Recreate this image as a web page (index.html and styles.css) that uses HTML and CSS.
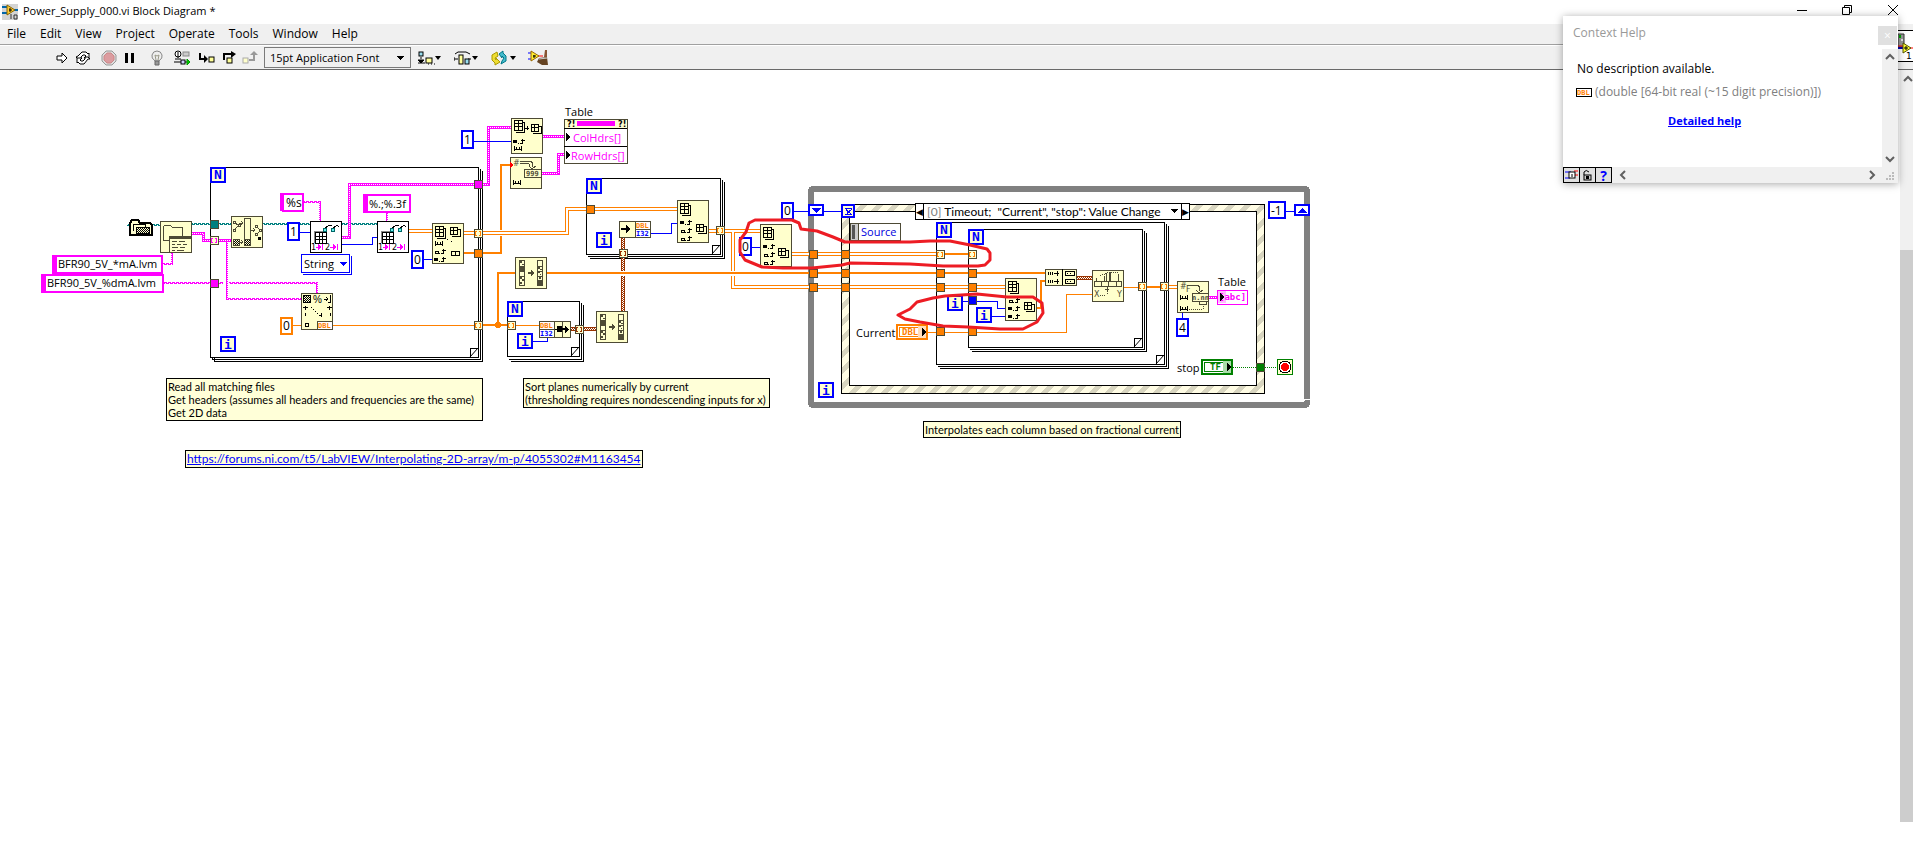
FILE: index.html
```html
<!DOCTYPE html>
<html lang="en">
<head>
<meta charset="utf-8">
<title>Power_Supply_000.vi Block Diagram *</title>
<link rel="stylesheet" href="styles.css">
</head>
<body>
<header>
  <div class="titlebar">
    <svg class="app-icon" width="16" height="16"><rect width="16" height="16" fill="#d4d4d4"/><path d="M0 3H6M0 9H6M12 6H16" stroke="#06a" stroke-width="2"/><path d="M5 1L13 6L5 11Z" fill="#fc3" stroke="#860"/><path d="M7 6h3M8 4v4" stroke="#000"/><path d="M9 10v5M12 11h3v4h-3z" stroke="#333" fill="none"/></svg>
    <h1>Power_Supply_000.vi Block Diagram *</h1>
    <div class="win-controls">
      <button aria-label="Minimize"><svg width="11" height="11"><path d="M1 5h10v1H1z"/></svg></button>
      <button aria-label="Restore"><svg width="11" height="11" fill="none" stroke="#000"><path d="M0.5 2.5h7v7h-7zM2.500 2V.5h7v7H8"/></svg></button>
      <button aria-label="Close"><svg width="11" height="11" stroke="#000"><path d="M0 0L10 10M10 0L0 10"/></svg></button>
    </div>
  </div>
  <nav class="menubar">
    <button>File</button><button>Edit</button><button>View</button><button>Project</button><button>Operate</button><button>Tools</button><button>Window</button><button>Help</button>
  </nav>
  <div class="toolbar">
    <button class="t-run" aria-label="Run"><svg width="12" height="12"><path d="M1 4h5V1l5 5-5 5V8H1z" fill="#fff" stroke="#000"/></svg></button>
    <button class="t-cont" aria-label="Run Continuously"><svg width="16" height="14" fill="#fff" stroke="#000"><path d="M3 5l4-4h4l2 2 1-1v5H9l2-2-1-1H8L6 6v2H3l-2-2z"/><path d="M13 8l-4 5H5l-2-2-1 1V7h5L5 9l1 1h2l2-2V6h3l2 2z"/></svg></button>
    <button class="t-abort" aria-label="Abort"><svg width="16" height="16"><path d="M5 1h6l4 4v6l-4 4H5l-4-4V5z" fill="#ddd" stroke="#999"/><path d="M6 3h4l3 3v4l-3 3H6l-3-3V6z" fill="#dc9ca0" stroke="#c88"/></svg></button>
    <button class="t-pause" aria-label="Pause"><svg width="10" height="12"><path d="M0 1h3v10H0zM6 1h3v10H6z"/></svg></button>
    <button class="t-bulb" aria-label="Highlight Execution"><svg width="14" height="16"><path d="M5 11Q1 8 2 5 3 1 7 1t5 4q1 3-3 6z" fill="#eee" stroke="#888"/><path d="M5 11h4v4H5z" fill="#999" stroke="#666"/><path d="M5 5l1 5M9 5l-1 5M5 5l2 1 2-1" stroke="#998" fill="none"/></svg></button>
    <button class="t-retain" aria-label="Retain Wire Values"><svg width="17" height="16" fill="none" stroke="#000"><circle cx="4" cy="4" r="3" fill="#fff"/><path d="M4 2v6M1 9h6M0 12h7M11 12h4"/><rect x="9" y="2" width="6" height="4" fill="#ccc" stroke="#888"/><rect x="7" y="10" width="4" height="4" fill="#ccf"/><path d="M13 9v6l3-3z" fill="#0c0" stroke="#090"/></svg></button>
    <button class="t-into" aria-label="Step Into"><svg width="17" height="14"><path d="M1 2v6h5" fill="none" stroke="#000" stroke-width="2"/><path d="M5 4l4 4-4 4z"/><rect x="10" y="6" width="5" height="5" fill="#ff9" stroke="#000"/></svg></button>
    <button class="t-over" aria-label="Step Over"><svg width="15" height="14"><path d="M2 9V3h9" fill="none" stroke="#000" stroke-width="2"/><path d="M9 0l5 3-5 4z"/><rect x="5" y="7" width="5" height="5" fill="#ff9" stroke="#000"/></svg></button>
    <button class="t-out" aria-label="Step Out"><svg width="16" height="14"><rect x="1" y="7" width="5" height="5" fill="#ffc" stroke="#aaa"/><path d="M7 9h5V4" fill="none" stroke="#999" stroke-width="2"/><path d="M8 4l4-4 4 4z" fill="#999"/></svg></button>
    <select class="font-pick" aria-label="Text settings"><option>15pt Application Font</option></select>
    <button class="t-align" aria-label="Align Objects"><svg width="24" height="14"><rect x="1" y="1" width="4" height="4" fill="#9de" stroke="#000"/><path d="M3 6v2M0 9h6l-3 3zM0 12h7M10 13h1M13 13h1M16 13h1" stroke="#000"/><rect x="8" y="7" width="6" height="5" fill="#ff9" stroke="#000"/><path d="M17 5h6l-3 4z"/></svg></button>
    <button class="t-dist" aria-label="Distribute Objects"><svg width="24" height="14"><path d="M1 3l3-2h8l4 2M0 6v4M0 8h4M14 8h3" stroke="#000" fill="none"/><rect x="5" y="4" width="4" height="9" fill="#ff9" stroke="#000"/><rect x="11" y="8" width="4" height="5" fill="#9de" stroke="#000"/><path d="M18 5h6l-3 4z"/></svg></button>
    <button class="t-reorder" aria-label="Reorder"><svg width="26" height="16"><path d="M6 2L1 5v5l3 3v2l5-3-4-4v2l-1-2 3-2z" fill="#ed3" stroke="#a90"/><path d="M10 14l5-3V6l-3-3V1L8 4l3 4V6l2 2-2 3z" fill="#4bc" stroke="#078"/><path d="M19 6h6l-3 4z"/></svg></button>
    <button class="t-clean" aria-label="Clean Up Diagram"><svg width="22" height="16"><path d="M0 3h4M0 9h4" stroke="#00f"/><path d="M10 6h5" stroke="red"/><path d="M3 1l8 5-8 5z" fill="#fe3" stroke="#960"/><path d="M5 6h3M6 5v3" stroke="#000"/><path d="M17 0h2v7h-3z" fill="#853"/><path d="M11 8l8-1 1 8h-6l-5-3z" fill="#642"/><path d="M11 9l8-1" stroke="#ccc"/></svg></button>
  </div>
</header>

<main>
  <section class="canvas" aria-label="Block diagram">
    <svg class="diagram" width="100%" height="100%">
      <defs>
        <pattern id="wave" width="4" height="2" patternUnits="userSpaceOnUse"><rect width="4" height="2" fill="#fff"/><path d="M0 0h3v1H0zM2 1h2v1H2zM0 1h1v1H0z" fill="#f0f"/></pattern>
        <pattern id="tealwave" width="4" height="2" patternUnits="userSpaceOnUse"><rect width="4" height="2" fill="#fff"/><path d="M0 0h3v1H0zM2 1h2v1H2zM0 1h1v1H0z" fill="#008080"/></pattern>
        <pattern id="check" width="2" height="2" patternUnits="userSpaceOnUse"><rect width="2" height="2" fill="#fff"/><path d="M0 0h1v1H0zM1 1h1v1H1z" fill="#930"/></pattern>
        <pattern id="bcheck" width="2" height="2" patternUnits="userSpaceOnUse"><rect width="2" height="2" fill="#ffffd0"/><path d="M0 0h1v1H0zM1 1h1v1H1z" fill="#000"/></pattern>
        <pattern id="hatch" width="16" height="16" patternUnits="userSpaceOnUse"><rect width="16" height="16" fill="#fffce4"/><path d="M0 16L16 0h-7L0 9zM16 16v-7l-7 7z" fill="#d8d5c0"/></pattern>
        <symbol id="tun" overflow="visible"><rect width="8" height="8" stroke="#4d4a35"/></symbol>
        <symbol id="arr" overflow="visible"><rect width="8" height="8" fill="#ffffd0" stroke="#4d4a35"/><path d="M1 2h2v1H2v3h1v1H1zM5 2h2v5H5V6h1V3H5z" fill="currentColor"/></symbol>
        <symbol id="grid" overflow="visible"><path d="M3 13h8V3H9M1 1h8v10H1zM1 4h8M1 7h8M5 1v10" fill="none" stroke="#000"/></symbol>
        <symbol id="grid2" overflow="visible"><path d="M3 10h8V3H9M1 1h7v7H1zM1 4h7M4 1v7" fill="none" stroke="#000"/></symbol>
        <symbol id="idx" overflow="visible"><path d="M1 1h3v2H1z" fill="none" stroke="#000"/><path d="M5 3h1M7 3h3M9 3v-4M8 0h4" stroke="#000" fill="none"/></symbol>
        <symbol id="idxf" overflow="visible"><path d="M0 0h4v3H0z"/><path d="M5 3h1M7 3h3M9 3v-4M8 0h4" stroke="#000" fill="none"/></symbol>
        <symbol id="num" overflow="visible"><path d="M1 0v5M8 0v5M2 3h6M3 1v3M6 1v3" stroke="#000" fill="none"/></symbol>
        <symbol id="nbox" overflow="visible"><rect x="1" y="1" width="14" height="14" fill="#ffffd0" stroke="#00f" stroke-width="2"/><text class="slab" x="8" y="12">N</text></symbol>
        <symbol id="ibox" overflow="visible"><rect x="1" y="1" width="14" height="14" fill="#ffffd0" stroke="#00f" stroke-width="2"/><text class="slab" x="8" y="13">i</text></symbol>
        <symbol id="fold" overflow="visible"><rect width="8" height="9" fill="#fff"/><path d="M0 9V0h8" fill="none" stroke="#000"/><path d="M0 9L8 0" stroke="#000" shape-rendering="auto"/></symbol>
        <symbol id="sheet" overflow="visible"><rect width="31" height="31" fill="#fff" stroke="#000"/><path d="M5 11h11v11H5zM5 15h11M5 18h11M9 11v11M12 11v11" fill="none" stroke="#000"/><path d="M4 10h12M4 10v12" stroke="#888"/><path d="M14 8l5-4 3 1M22 8l5-4 2 2" fill="none" stroke="#000"/><circle cx="15" cy="9" r="2" fill="#6ee" stroke="#066"/><circle cx="23" cy="9" r="2" fill="#6ee" stroke="#066"/><text class="pix" x="1" y="29">1</text><text class="pix" x="15" y="29">2</text><path d="M6 26h3M20 26h3" stroke="#f0f"/><path d="M8 23l4 3-4 3zM12 23h1v6h-1zM23 23l4 3-4 3zM27 23h1v6h-1z" fill="#f0f"/></symbol>
        <symbol id="transpose" overflow="visible"><rect width="31" height="31" class="node"/><path d="M4 3h5v6H4zM22 3h5v25h-5zM4 14h5v5H4zM4 19h5v9H4zM22 9h5M22 14h5M22 19h5" fill="#ffffd0" stroke="#4d4a35"/><path d="M4 9h6v5H4zM22 23h6v6h-6zM13 15h3v-2l3 3-3 3v-2h-3z" fill="#4d4a35"/><path d="M5 4h2v2H5zM7 7h2v1H7zM5 20h2v2H5zM7 22h2v2H7zM5 25h2v2H5zM23 10h2v2h-2zM25 12h2v1h-2zM23 15h2v1h-2zM25 17h1v1h-1zM24 20h2v2h-2z" fill="#4d4a35"/></symbol>
      </defs>
      <g transform="translate(0 -70)">
        <!-- structures -->
        <g class="loop">
          <path d="M214 168V361H482V171"/><path d="M212 168V359H480V169"/><rect x="210" y="167" width="268" height="190"/>
          <path d="M590 258H724V182M588 256H722V180"/><rect x="586" y="178" width="134" height="76"/>
          <path d="M511 361H583V305M509 359H581V303"/><rect x="507" y="301" width="72" height="55"/>
        </g>
        <rect x="811" y="189" width="496" height="216" rx="2" fill="#fff" stroke="#808080" stroke-width="6"/>
        <path d="M1303 399h8M1302 400h3" stroke="#fff"/>
        <rect x="841" y="204" width="423" height="189" fill="url(#hatch)" stroke="#000"/>
        <rect x="849" y="211" width="407" height="174" fill="#fff" stroke="#000"/>
        <g class="loop">
          <path d="M940 368H1168V226M938 366H1166V224"/><rect x="936" y="222" width="228" height="142"/>
          <path d="M972 351H1146V233M970 349H1144V231"/><rect x="968" y="229" width="174" height="118"/>
        </g>
        <use href="#fold" x="470" y="348"/><use href="#fold" x="712" y="245"/><use href="#fold" x="571" y="347"/><use href="#fold" x="1134" y="338"/><use href="#fold" x="1156" y="355"/>

        <!-- wires -->
        <g class="wire">
          <path class="path" d="M127 225H160M192 224H310M342 224H377"/>
          <path class="str" d="M163 264H172V253M164 283H223M229 283H317V293M304 202H320V221M387 213V221"/>
          <path class="str" d="M227 240V299H301"/>
          <path class="sa" d="M192 233H203V240H231M342 237H349V184H488V127H511M543 136H564M542 173H558V154H564M1209 297H1217"/><path class="sb" d="M192 233H203V240H231M342 237H349V184H488V127H511M543 136H564M542 173H558V154H564M1209 297H1217"/>
          <path class="int" d="M300 232H310M342 244H372V237H377M424 259H432M474 141H511M651 233H671V223H677M533 341H547V337M752 247H760M794 211H808M824 211H841M963 301H997V308H1005M992 316H1005M1182 313V319M1286 211H1295"/>
          <path class="o1" d="M293 325H301M333 325H474M515 325H539M928 332H1066V294H1092M1124 287H1138"/>
          <path class="o3" d="M464 253H501V165H511M482 325H507M498 325V273H515M547 273H1045M945 254H968M1037 308H1041V281H1045M1147 287H1160"/>
          <path d="M497 233h8" stroke="#fff" stroke-width="6"/>
          <path class="da" d="M409 231H432M464 233H567V209H677M709 231H760M733 231V287H1005M792 254H936M1168 287H1177"/><path class="db" d="M409 231H432M464 233H567V209H677M709 231H760M733 231V287H1005M792 254H936M1168 287H1177"/>
          <path class="ba" d="M623 238V311M571 329H596M1077 278H1092"/><path class="bb" d="M623 238V311M571 329H596M1077 278H1092"/>
          <path d="M616 273h14M728 273h10" stroke="#fff" stroke-width="5"/><path class="o3" d="M615 273h16M727 273h12"/>
          <path d="M1233 367H1277" stroke="#008000" stroke-dasharray="1 1"/>
          <path d="M855 211H915" stroke="#000"/>
        </g>
        <circle cx="498" cy="325" r="3" fill="#ff8000"/>

        <!-- tunnels -->
        <g fill="#ff8000"><use href="#tun" x="474" y="249"/><use href="#tun" x="586" y="205"/>
          <use href="#tun" x="809" y="250"/><use href="#tun" x="809" y="269"/><use href="#tun" x="809" y="283"/>
          <use href="#tun" x="841" y="250"/><use href="#tun" x="841" y="269"/><use href="#tun" x="841" y="283"/>
          <use href="#tun" x="936" y="269"/><use href="#tun" x="936" y="283"/><use href="#tun" x="936" y="327"/>
          <use href="#tun" x="968" y="269"/><use href="#tun" x="968" y="283"/><use href="#tun" x="968" y="327"/></g>
        <g fill="#f0f"><use href="#tun" x="474" y="180"/><use href="#tun" x="210" y="279"/></g>
        <use href="#tun" x="210" y="220" fill="#008080"/><use href="#tun" x="968" y="296" fill="#00f"/><use href="#tun" x="1256" y="363" fill="#008000"/>
        <g color="#ff8000"><use href="#arr" x="474" y="229"/><use href="#arr" x="474" y="321"/><use href="#arr" x="716" y="226"/><use href="#arr" x="507" y="321"/><use href="#arr" x="936" y="250"/><use href="#arr" x="968" y="250"/><use href="#arr" x="1138" y="282"/><use href="#arr" x="1160" y="282"/></g>
        <g color="#993300"><use href="#arr" x="619" y="249"/><use href="#arr" x="575" y="325"/></g>
        <g color="#ff00ff"><use href="#arr" x="210" y="236"/></g>

        <use href="#nbox" x="210" y="167"/><use href="#nbox" x="586" y="178"/><use href="#nbox" x="507" y="301"/><use href="#nbox" x="936" y="222"/><use href="#nbox" x="968" y="229"/>
        <use href="#ibox" x="220" y="336"/><use href="#ibox" x="596" y="232"/><use href="#ibox" x="517" y="333"/><use href="#ibox" x="818" y="382"/><use href="#ibox" x="947" y="295"/><use href="#ibox" x="976" y="307"/>

        <!-- path constant and list folder -->
        <path d="M130 235V223l2-3h6l2 3h10l2 2v10z" fill="#ffffd0" stroke="#000" stroke-width="2"/><path d="M133 231v-7h12v3" fill="none" stroke="#000"/><rect x="136" y="227" width="13" height="6" fill="url(#bcheck)" stroke="#000"/>
        <g transform="translate(160 221)"><rect width="31" height="31" class="node"/><path d="M3 19V6l2-2h5l2 2h10v11M3 19h6" class="ol"/><rect x="9" y="15" width="22" height="16" class="ol"/><path d="M9 15h22v3H9z" fill="#4d4a35"/><path d="M12 20h5M19 20h6M12 23h3M17 23h4M23 23h4M12 26h6M20 26h5M12 29h3M17 29h7" class="ol"/></g>
        <!-- strip path -->
        <g transform="translate(231 216)"><rect width="31" height="31" class="node"/><path d="M13 2h6v27h-6z" class="ol"/><path d="M2 5h2v2H2zM7 8h2v2H7zM2 13h2v2H2zM4 7l3 2M4 13l3-3M8 7h4M10 5l2 2-2 2M24 9h2v2h-2zM28 13h2v2h-2zM24 17h2v2h-2zM20 14h4M22 12l2 2-2 2M26 11l2 2M26 18l2-2M8 26h4M10 24l2 2-2 2" class="ol"/><path d="M2 23h6v6H2zM13 23h6v6h-6z" fill="url(#bcheck)" stroke="#4d4a35"/><path d="M27 21h3v3h-3z"/></g>
        <use href="#sheet" x="310" y="221"/><use href="#sheet" x="377" y="221"/>
        <!-- index array beside loop edge -->
        <g transform="translate(432 223)"><rect width="31" height="40" class="node"/><use href="#grid" x="2" y="2"/><use href="#grid2" x="17" y="3"/><use href="#num" x="2" y="18"/><path d="M15 16h1M19 18h1" stroke="#000"/><use href="#idx" x="2" y="27"/><use href="#idxf" x="2" y="35"/><path d="M19 28h8v4h-8zM23 28v4" class="bk"/></g>
        <!-- scan from string -->
        <g transform="translate(301 293)"><rect width="31" height="36" class="node"/><rect x="2" y="2" width="7" height="7" fill="url(#bcheck)" stroke="#000"/><text class="sm" x="12" y="10">%</text><path d="M23 6h4M25 4l2 2-2 2M29 2v7h-2M4 13v4M2 14h5M28 13v4M26 14h5M4 20v3M29 20v3M10 14h1M12 16h1M14 18h1M16 20h1M18 22l2 1v-3" class="bk"/><circle cx="6" cy="32" r="2" class="bk"/><rect x="16" y="28" width="15" height="8" fill="#fff" stroke="#4d4a35"/><text class="dt or" x="17" y="35">DBL</text></g>
        <!-- array subset / number to string -->
        <g transform="translate(511 118)"><rect width="31" height="35" class="node"/><use href="#grid" x="2" y="1"/><use href="#grid2" x="19" y="5"/><path d="M14 10h4M16 8v4" class="bk"/><use href="#idxf" x="2" y="22"/><use href="#num" x="2" y="28"/></g>
        <g transform="translate(510 157)"><rect width="31" height="31" class="node"/><text class="pix ol2" x="3" y="9">#</text><path d="M10 4h9q4 0 4 6M10 6h8q2 1 2 4M19 9l3 3 4-3" class="ol"/><rect x="14" y="12" width="17" height="8" class="ol"/><text class="dt ol2" x="16" y="19">999</text><use href="#num" x="2" y="23"/></g>
        <path d="M510 162l4 3-4 3z" fill="red"/>
        <!-- table property node -->
        <g transform="translate(564 119)"><rect width="63" height="44" fill="#fff" stroke="#4d4a35"/><path d="M1 1h62v8H1z" fill="#ffffd0"/><path d="M0 9h63M0 27h63" stroke="#000"/><path d="M13 2h38v5H13z" fill="#f0f"/><text class="pix b" x="3" y="8">?!</text><text class="pix b" x="54" y="8">?!</text><path d="M2 14l4 4-4 4zM2 32l4 4-4 4z"/><text class="prop" x="9" y="23">ColHdrs[]</text><text class="prop" x="7" y="41">RowHdrs[]</text></g>
        <text class="cap" x="565" y="116">Table</text>
        <!-- index arrays with three terminals -->
        <g transform="translate(677 200)"><rect width="31" height="42" class="node"/><use href="#grid" x="2" y="2"/><use href="#grid2" x="18" y="23"/><use href="#idxf" x="3" y="21"/><use href="#idx" x="3" y="29"/><use href="#idx" x="3" y="37"/></g>
        <g transform="translate(1005 278)"><rect width="31" height="42" class="node"/><use href="#grid" x="2" y="2"/><use href="#grid2" x="18" y="23"/><use href="#idx" x="3" y="21"/><use href="#idxf" x="3" y="29"/><use href="#idxf" x="3" y="37"/></g>
        <!-- unbundle / bundle -->
        <g transform="translate(619 221)"><rect width="31" height="16" class="node"/><path d="M16 0v16h15V0z" fill="#fff" stroke="#4d4a35"/><path d="M16 8h15" stroke="#4d4a35"/><path d="M2 7h5V4l4 4-4 4V9H2z"/><text class="dt or" x="17" y="7">DBL</text><text class="dt bl" x="17" y="15">I32</text></g>
        <g transform="translate(539 321)"><rect width="31" height="16" class="node"/><path d="M0 0v16h15V0z" fill="#fff" stroke="#4d4a35"/><path d="M0 8h15M23 0v16" stroke="#4d4a35"/><path d="M16 8h2V5h5v2h3V5l4 3-4 4V9h-3v2h-5V9h-2z"/><text class="dt or" x="1" y="7">DBL</text><text class="dt bl" x="1" y="15">I32</text></g>
        <use href="#transpose" x="515" y="257"/><use href="#transpose" x="596" y="311"/>

        <!-- constants -->
        <g class="const pink"><path d="M52 255h5v19h-5zM41 274h5v19h-5zM280 193h4v18h-4zM363 194h5v19h-5z" fill="#f0f" stroke="none"/><rect x="56" y="256" width="106" height="17"/><rect x="45" y="275" width="118" height="17"/><rect x="283" y="194" width="20" height="17"/><rect x="367" y="195" width="43" height="17"/></g>
        <g class="const blue"><rect x="288" y="223" width="11" height="17"/><rect x="412" y="251" width="11" height="17"/><rect x="462" y="131" width="11" height="17"/><rect x="740" y="238" width="11" height="17"/><rect x="782" y="203" width="11" height="16"/><rect x="1177" y="319" width="11" height="17"/><rect x="1269" y="202" width="16" height="16"/><rect x="809" y="205" width="14" height="10"/><rect x="1295" y="205" width="14" height="10"/><rect x="842" y="205" width="12" height="12" fill="#ffffd0"/></g>
        <rect x="281" y="318" width="11" height="16" fill="#fff" stroke="#ff8000" stroke-width="2"/>
        <path d="M811 208h10l-5 5zM1297 213h10l-5-5z" fill="#00f"/><path d="M845 208h7M845 214h7M846 208v2l4 3v2M851 208v2l-4 3v2" stroke="#00f" fill="none"/>
        <g class="val"><text class="str-val" x="58" y="268">BFR90_5V_*mA.lvm</text><text class="str-val" x="47" y="287">BFR90_5V_%dmA.lvm</text><text x="286" y="207">%s</text><text class="str-val" x="369" y="208">%.;%.3f</text>
          <text x="290" y="236">1</text><text x="414" y="264">0</text><text x="464" y="144">1</text><text x="742" y="251">0</text><text x="784" y="215">0</text><text x="1179" y="332">4</text><text x="1271" y="215">-1</text><text x="283" y="330">0</text></g>

        <!-- index array outside the while loop -->
        <g transform="translate(760 224)"><rect width="31" height="42" class="node"/><use href="#grid" x="2" y="2"/><use href="#grid2" x="17" y="23"/><use href="#idxf" x="3" y="21"/><use href="#idx" x="3" y="29"/><use href="#idx" x="3" y="37"/></g>
        <!-- event source node -->
        <rect x="850" y="223" width="50" height="17" fill="#fff" stroke="#4d4a35"/><path d="M850 223h8v17h-8z" fill="#ccc" stroke="#4d4a35"/><path d="M852 225h3v14h-3z" fill="#555"/><text class="src" x="861" y="236">Source</text>
        <!-- build cluster -->
        <g transform="translate(1045 269)"><rect width="31" height="16" class="node"/><path d="M17 0v16" stroke="#000"/><path d="M3 3v3M5 3v3M7 3v3M9 4h5M12 2v5M3 11v3M5 11v3M7 11v3M9 12h5M12 10v5M20 2h9v4h-9zM20 10h9v4h-9zM22 4h1M25 4h1M22 12h1M25 12h1" class="bk"/></g>
        <!-- interpolate -->
        <g transform="translate(1092 270)"><rect width="31" height="31" class="node"/><path d="M2 11h22v5H2zM24 11h5v5h-5zM9 11v5M16 11v5M4 8v3M12 6v5M14 4v7M17 2v9M18 2v9M26 4v7M15 16v5M13 19h4" class="ol"/><path d="M8 6l9-4h9M8 25h5M15 21v4" class="ol" stroke-dasharray="1 1"/><text class="pix ol2" x="2" y="27">X</text><text class="pix ol2" x="25" y="27">Y</text></g>
        <!-- number to fractional string -->
        <g transform="translate(1177 281)"><rect width="31" height="31" class="node"/><text class="pix ol2" x="3" y="8">#</text><text class="pix ol2" x="9" y="11">F</text><path d="M10 4h9q4 0 4 6M19 9l3 3 4-3M22 23v-2M22 23h7v-2" class="ol"/><rect x="15" y="12" width="16" height="8" class="ol"/><text class="dt ol2" x="15" y="19">n.nn</text><use href="#num" x="2" y="14"/><use href="#num" x="2" y="25"/><path d="M12 28h14v-4" class="ol" stroke-dasharray="1 1"/></g>

        <!-- terminals -->
        <g transform="translate(896 324)"><rect x="1" y="1" width="30" height="14" fill="#fff" stroke="#ff8000" stroke-width="2"/><rect x="3" y="3" width="25" height="9" fill="none" stroke="#ff8000"/><rect x="22" y="2" width="8" height="12" fill="#fdb"/><text class="term or" x="6" y="11">DBL</text><path d="M26 4l4 4-4 4z"/></g>
        <text class="cap" x="856" y="337">Current</text>
        <g transform="translate(1216 289)"><rect x="1" y="1" width="30" height="14" fill="#fff" stroke="#f0f"/><rect x="2" y="2" width="8" height="12" fill="#fbf"/><text class="term pk" x="3" y="11">[abc]</text><path d="M4 4l4 4-4 4z"/></g>
        <text class="cap" x="1218" y="286">Table</text>
        <g transform="translate(1201 359)"><rect x="1" y="1" width="30" height="14" fill="#fff" stroke="#008000" stroke-width="2"/><rect x="3" y="3" width="25" height="9" fill="none" stroke="#008000"/><rect x="22" y="2" width="8" height="12" fill="#ada"/><text class="term gr" x="9" y="11">TF</text><path d="M26 4l4 4-4 4z"/></g>
        <text class="cap" x="1177" y="372">stop</text>
        <g transform="translate(1277 359)"><rect width="15" height="15" fill="#ffffd0" stroke="#008000"/><circle cx="8" cy="8" r="6" fill="#fff" stroke="#000"/><circle cx="8" cy="8" r="4" fill="red"/></g>

        <!-- hand-drawn highlights -->
        <g class="ink"><path d="M740 240L746 232L749 223L755 220H792L799 223L801 229L817 231L833 237L845 242H910L930 241H950L970 245L987 249L990 253V260L985 265L978 266H943L910 264L850 263L842 265L812 268H783L762 267L745 260L740 252Z"/><path d="M898 315L910 309L917 302L933 298L945 296L977 294L1007 297H1033L1042 303L1043 313L1037 322L1023 329H1000L968 327L943 326L920 322L905 319Z"/></g>
      </g>
    </svg>
    <div class="event-bar"><button class="prev" aria-label="Previous case">◀</button><label for="case">[0]</label><select id="case"><option>Timeout;&nbsp; "Current", "stop": Value Change</option></select><button class="next" aria-label="Next case">▶</button></div>
    <select class="ring" aria-label="Format"><option>String</option></select>
    <p class="note note-read">Read all matching files<br>Get headers (assumes all headers and frequencies are the same)<br>Get 2D data</p>
    <p class="note note-sort">Sort planes numerically by current<br>(thresholding requires nondescending inputs for x)</p>
    <p class="note note-interp">Interpolates each column based on fractional current</p>
    <a class="note note-link" href="https://forums.ni.com/t5/LabVIEW/Interpolating-2D-array/m-p/4055302#M1163454">https://forums.ni.com/t5/LabVIEW/Interpolating-2D-array/m-p/4055302#M1163454</a>
  </section>
  <div class="scrollbar"><svg width="13" height="14" fill="none" stroke="#606060" stroke-width="2"><path d="M4 11l4-4 4 4"/></svg><div class="thumb"></div></div>
</main>

<div class="vi-icon"><svg width="15" height="30"><path d="M0 3h6v13H0z" fill="#999" stroke="#333"/><path d="M1 4h2v3H1z" fill="#0a0"/><circle cx="4" cy="9" r="1" fill="#fff"/><path d="M0 17h5" stroke="#00a" stroke-width="2"/><path d="M0 15h5M11 17h4" stroke="red"/><path d="M5 12l8 5-8 5z" fill="#ff3" stroke="#550"/><path d="M6 17h4M8 15v4" stroke="#000"/><text class="vi-no" x="8" y="28">1</text></svg></div>

<aside class="help">
  <div class="help-title"><h2>Context Help</h2><button aria-label="Close help">×</button></div>
  <div class="help-mid">
    <div class="help-body">
      <p>No description available.</p>
      <p class="type"><svg class="dbl" width="17" height="10"><rect x="1" y="1" width="15" height="8" fill="#fff" stroke="#000"/><text class="dt or" x="2" y="8">DBL</text></svg>(double [64-bit real (~15 digit precision)])</p>
      <a href="#help">Detailed help</a>
    </div>
    <div class="help-scroll"><svg width="15" height="16"><path d="M4 10l4-4 4 4"/></svg><svg width="15" height="16"><path d="M4 6l4 4 4-4"/></svg></div>
  </div>
  <div class="help-foot">
    <button aria-label="Show optional terminals"><svg width="13" height="14"><path d="M0 4h6M0 10h5" stroke="#00f"/><path d="M9 3h5M9 7h5" stroke="red"/><rect x="4" y="4" width="6" height="6" fill="#fff" stroke="#000"/><path d="M7 6v3" stroke="#000"/></svg></button><button aria-label="Lock help"><svg width="13" height="14"><path d="M3 7V4q2-3 5 0" fill="none" stroke="#000"/><rect x="3" y="7" width="7" height="5" fill="#ccc" stroke="#000"/><path d="M5 8h3v3H5z"/></svg></button><button class="q" aria-label="More help">?</button>
    <svg class="left" width="16" height="16"><path d="M10 4L6 8l4 4"/></svg><svg class="right" width="16" height="16"><path d="M6 4l4 4-4 4"/></svg>
    <svg class="grip" width="10" height="10"><path d="M6 0h2v2H6zM3 3h2v2H3zM6 3h2v2H6zM0 6h2v2H0zM3 6h2v2H3zM6 6h2v2H6z" fill="#bbb"/></svg>
  </div>
</aside>
</body>
</html>
```
FILE: styles.css
```css
* { box-sizing: border-box; }
body { margin: 0; height: 100vh; display: flex; flex-direction: column; position: relative; overflow: hidden; background: #fff; color: #000; font: 12px/16px "Open Sans", "Noto Sans", sans-serif; }
button { border: 0; padding: 0; margin: 0; background: none; font: inherit; color: inherit; }
h1, h2, p { margin: 0; font-size: 12px; font-weight: 400; }
svg { display: block; }

.titlebar { height: 24px; display: flex; align-items: center; padding: 0 14px 2px 2px; gap: 5px; }
.app-icon { margin-top: 1px; }
.titlebar h1 { font-size: 11px; }
.win-controls { margin-left: auto; display: flex; gap: 35px; margin-top: -2px; }
.menubar { height: 21px; display: flex; gap: 14px; padding-left: 7px; background: #f0f0f0; border-bottom: 1px solid #a0a0a0; align-items: center; font-size: 12px; }
.toolbar { height: 25px; display: flex; align-items: center; background: #f0f0f0; border-top: 1px solid #fff; border-bottom: 1px solid #696969; padding-left: 56px; }
.t-cont { margin-left: 7px; }
.t-abort { margin-left: 10px; }
.t-pause { margin-left: 8px; }
.t-bulb { margin-left: 15px; }
.t-retain { margin-left: 10px; }
.t-into { margin-left: 8px; }
.t-over { margin-left: 6px; }
.t-out { margin-left: 5px; }
select { appearance: none; font: inherit; color: #000; }
.font-pick { width: 147px; height: 21px; margin-left: 6px; padding: 0 5px; border: 1px solid #7a7a7a; border-radius: 0; background: linear-gradient(#000, #000) 132px 8px / 7px 1px no-repeat, linear-gradient(#000, #000) 133px 9px / 5px 1px no-repeat, linear-gradient(#000, #000) 134px 10px / 3px 1px no-repeat, linear-gradient(#000, #000) 135px 11px / 1px 1px no-repeat, #f0f0f0; font: 11px "Open Sans", sans-serif; }
.t-align { margin-left: 7px; }
.t-dist { margin-left: 12px; }
.t-reorder { margin-left: 13px; }
.t-clean { margin-left: 11px; }

main { flex: 1; display: flex; min-height: 0; }
.canvas { flex: 1; position: relative; overflow: hidden; }
.scrollbar { width: 13px; background: #f0f0f0; display: flex; flex-direction: column; border-bottom: 34px solid #fff; }
.thumb { flex: 1; margin-top: 166px; background: #cdcdcd; }

.diagram { shape-rendering: crispEdges; font-family: "Open Sans", "Noto Sans", sans-serif; }
.loop { fill: #fff; stroke: #000; }
.loop path { fill: none; }
.wire { fill: none; }
.path { stroke: url(#tealwave); stroke-width: 2; }
.str { stroke: url(#wave); stroke-width: 2; }
.sa { stroke: #f0f; stroke-width: 3; }
.sb { stroke: #fff; stroke-width: 1; stroke-dasharray: 1 1; }
.int { stroke: #00f; }
.o1 { stroke: #ff8000; }
.o3 { stroke: #ff8000; stroke-width: 2; }
.da { stroke: #ff8000; stroke-width: 4; }
.db { stroke: #fff; stroke-width: 2; }
.ba { stroke: #930; stroke-width: 4; }
.bb { stroke: url(#check); stroke-width: 2; }
.node { fill: #ffffcc; stroke: #4d4a35; }
.ol { fill: none; stroke: #4d4a35; }
.ol2 { fill: #4d4a35; }
.bk { fill: none; stroke: #000; }
.or { fill: #ff8000; }
.bl { fill: #00f; }
.pk { fill: #f0f; }
.gr { fill: #008000; }
.slab { font: bold 13px "DejaVu Sans Mono", monospace; fill: #00f; text-anchor: middle; }
.pix { font: 8px "DejaVu Sans", sans-serif; }
.sm { font: 10px "Liberation Sans", sans-serif; }
.b { font-weight: 700; }
.dt { font: bold 7px "DejaVu Sans Mono", monospace; }
.term { font: bold 9px "DejaVu Sans Mono", monospace; }
.const { fill: #fff; stroke-width: 2; }
.pink { stroke: #f0f; }
.blue { stroke: #00f; }
.val { font-size: 12px; }
.str-val { font-size: 11px; }
.cap { font-size: 11px; }
.prop { font-size: 11px; fill: #f0f; }
.src { font-size: 11px; fill: #00d; }
.ink { fill: none; stroke: #ed1c24; stroke-width: 3; stroke-linejoin: round; shape-rendering: auto; }

.event-bar { position: absolute; left: 915px; top: 133px; width: 275px; height: 17px; display: flex; background: #fff; border: 1px solid #000; font: 12px/15px Lato, sans-serif; }
.event-bar button { width: 8px; font: 9px/14px "DejaVu Sans", sans-serif; overflow: hidden; }
.event-bar .prev { border-right: 1px solid #000; }
.event-bar .next { border-left: 1px solid #000; }
.event-bar label { color: #808080; padding: 0 3px; }
.event-bar select { flex: 1; min-width: 0; border: 0; padding: 0; background: linear-gradient(#000, #000) right 3px top 5px / 7px 1px no-repeat, linear-gradient(#000, #000) right 4px top 6px / 5px 1px no-repeat, linear-gradient(#000, #000) right 5px top 7px / 3px 1px no-repeat, linear-gradient(#000, #000) right 6px top 8px / 1px 1px no-repeat; }
.ring { position: absolute; left: 301px; top: 184px; width: 49px; height: 19px; padding: 0 2px; border: 1px solid #00f; border-radius: 0; box-shadow: 1px 1px #fff, 2px 2px #00f; font: 11px "Open Sans", sans-serif; background: linear-gradient(#00f, #00f) 38px 7px / 7px 1px no-repeat, linear-gradient(#00f, #00f) 39px 8px / 5px 1px no-repeat, linear-gradient(#00f, #00f) 40px 9px / 3px 1px no-repeat, linear-gradient(#00f, #00f) 41px 10px / 1px 1px no-repeat, #fff; }
.note { position: absolute; border: 1px solid #000; background: #ffffd8; font: 11px/13px Lato, sans-serif; padding: 1px; white-space: nowrap; }
.note-read { left: 166px; top: 308px; padding-right: 8px; }
.note-sort { left: 523px; top: 308px; padding-right: 3px; }
.note-interp { left: 923px; top: 351px; }
.note-link { left: 185px; top: 380px; font-size: 12px; line-height: 14px; color: #00f; }

.vi-icon { position: absolute; right: 0; top: 30px; width: 15px; height: 32px; background: #fff; border: solid #000; border-width: 1px 0; }
.vi-no { font: 9px "DejaVu Sans", sans-serif; }
.help { position: absolute; right: 15px; top: 16px; width: 335px; height: 167px; display: flex; flex-direction: column; background: #fff; box-shadow: 0 1px 8px rgba(0, 0, 0, .35); }
.help-title { display: flex; justify-content: space-between; height: 33px; padding: 9px 1px 0 10px; color: #999; }
.help-title button { width: 19px; height: 19px; background: #e0e0e0; color: #fff; line-height: 16px; margin-top: 1px; }
.help-mid { flex: 1; display: flex; }
.help-body { flex: 1; padding: 12px 0 0 14px; }
.help-body .type { display: flex; align-items: center; gap: 3px; margin: 7px 0 13px -2px; color: #808080; }
.help-body a { display: block; width: max-content; margin-left: 91px; font-size: 11px; font-weight: 700; color: #00f; }
.help-scroll { width: 16px; background: #f0f0f0; display: flex; flex-direction: column; justify-content: space-between; }
.help-scroll svg, .left, .right { fill: none; stroke: #606060; stroke-width: 2; }
.dbl { shape-rendering: crispEdges; }
.help-foot { height: 16px; display: flex; background: #f0f0f0; }
.help-foot button { width: 17px; height: 16px; border: 1px solid #000; margin-right: -1px; padding: 0 1px; background: #e0e0e0; }
.help-foot .q { color: #00f; font-weight: 700; font-size: 14px; line-height: 13px; }
.left { margin-left: 4px; }
.right { margin-left: auto; }
.grip { margin: 5px 2px 0 6px; }
```
